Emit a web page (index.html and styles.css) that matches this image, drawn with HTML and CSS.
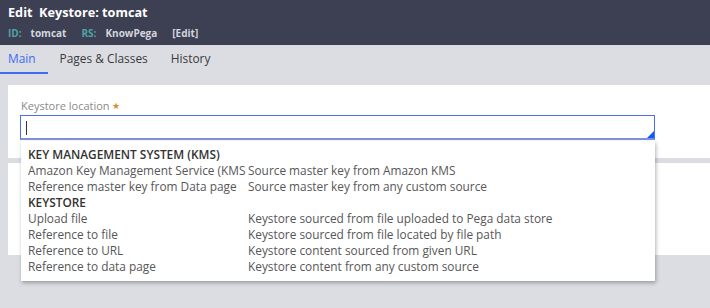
FILE: index.html
```html
<!DOCTYPE html>
<html>
<head>
<meta charset="utf-8">
<link rel="stylesheet" href="styles.css">
</head>
<body>
<div class="header">
  <div class="title">Edit&nbsp; Keystore: tomcat</div>
  <div class="meta">
    <span class="key">ID:</span><span class="val">tomcat</span>
    <span class="key">RS:</span><span class="val">KnowPega</span>
    <span class="val">[Edit]</span>
  </div>
</div>
<div class="tabs">
  <div class="tab active">Main</div>
  <div class="tab">Pages &amp; Classes</div>
  <div class="tab">History</div>
</div>
<div class="content">
  <div class="panel panel-top">
    <div class="label">Keystore location <span class="star">&#9733;</span></div>
    <div class="field">
      <div class="input"><span class="caret"></span><span class="corner"></span></div>
      <div class="dropdown">
        <div class="row group">KEY MANAGEMENT SYSTEM (KMS)</div>
        <div class="row"><span class="c1">Amazon Key Management Service (KMS</span><span class="c2">Source master key from Amazon KMS</span></div>
        <div class="row"><span class="c1">Reference master key from Data page</span><span class="c2">Source master key from any custom source</span></div>
        <div class="row group">KEYSTORE</div>
        <div class="row"><span class="c1">Upload file</span><span class="c2">Keystore sourced from file uploaded to Pega data store</span></div>
        <div class="row"><span class="c1">Reference to file</span><span class="c2">Keystore sourced from file located by file path</span></div>
        <div class="row"><span class="c1">Reference to URL</span><span class="c2">Keystore content sourced from given URL</span></div>
        <div class="row"><span class="c1">Reference to data page</span><span class="c2">Keystore content from any custom source</span></div>
      </div>
    </div>
  </div>
  <div class="panel panel-bottom"></div>
</div>
</body>
</html>
```
FILE: styles.css
```css
* { box-sizing: border-box; }
html, body { margin: 0; padding: 0; }
body {
  background: #dcdde3;
  font-family: "Open Sans", "Liberation Sans", sans-serif;
  width: 710px;
  height: 308px;
  overflow: hidden;
}
.header {
  background: #3d3f53;
  height: 45px;
  padding: 3px 8px 0;
}
.title {
  color: #ffffff;
  font-weight: 700;
  font-size: 12.7px;
  line-height: 18px;
}
.meta {
  margin-top: 3px;
  font-size: 10px;
  font-weight: 700;
  line-height: 18px;
  display: flex;
}
.meta .key { color: #4fa3a6; margin-right: 9px; }
.meta .val { color: #d4d5dd; margin-right: 15px; }
.tabs {
  display: flex;
  height: 29px;
  background: #dcdde3;
}
.tab {
  font-size: 11.9px;
  color: #3b3b3b;
  line-height: 27px;
  padding: 0 11px 0 12px;
  border-bottom: 2px solid transparent;
}
.tab.active {
  color: #3d6cf0;
  padding: 0 12px 0 8px;
  border-bottom-color: #3d6cf0;
}
.content {
  padding: 11px 0 0 8px;
}
.panel { background: #ffffff; }
.panel-top {
  height: 73px;
  padding: 13px 55px 0 12px;
}
.panel-bottom {
  height: 92px;
  margin-top: 5px;
}
.label {
  font-size: 11px;
  color: #8a8a8a;
  line-height: 16px;
  padding-left: 1px;
}
.star { color: #e08a2a; font-size: 9px; position: relative; top: -1px; }
.field { position: relative; margin-top: 0; }
.input {
  position: relative;
  height: 25px;
  border: 1px solid #4a6ef5;
  border-bottom: 2px solid #8090e0;
  background: #fff;
}
.caret {
  position: absolute;
  left: 5px;
  top: 5px;
  width: 1px;
  height: 14px;
  background: #333;
}
.corner {
  position: absolute;
  right: 0;
  bottom: 0;
  width: 0;
  height: 0;
  border-left: 7px solid transparent;
  border-bottom: 7px solid #0a5cff;
}
.dropdown {
  position: absolute;
  left: 1px;
  top: 26px;
  width: 634px;
  height: 140px;
  background: #fff;
  box-shadow: 1px 2px 4px rgba(0,0,0,0.3);
  padding: 5px 0 0 7px;
  z-index: 5;
}
.row {
  display: flex;
  font-size: 11.85px;
  line-height: 16px;
  color: #575757;
  white-space: nowrap;
}
.row.group { color: #333; font-weight: 600; }
.c1 { width: 220px; overflow: hidden; flex: none; }
.c2 { flex: 1; }
```
